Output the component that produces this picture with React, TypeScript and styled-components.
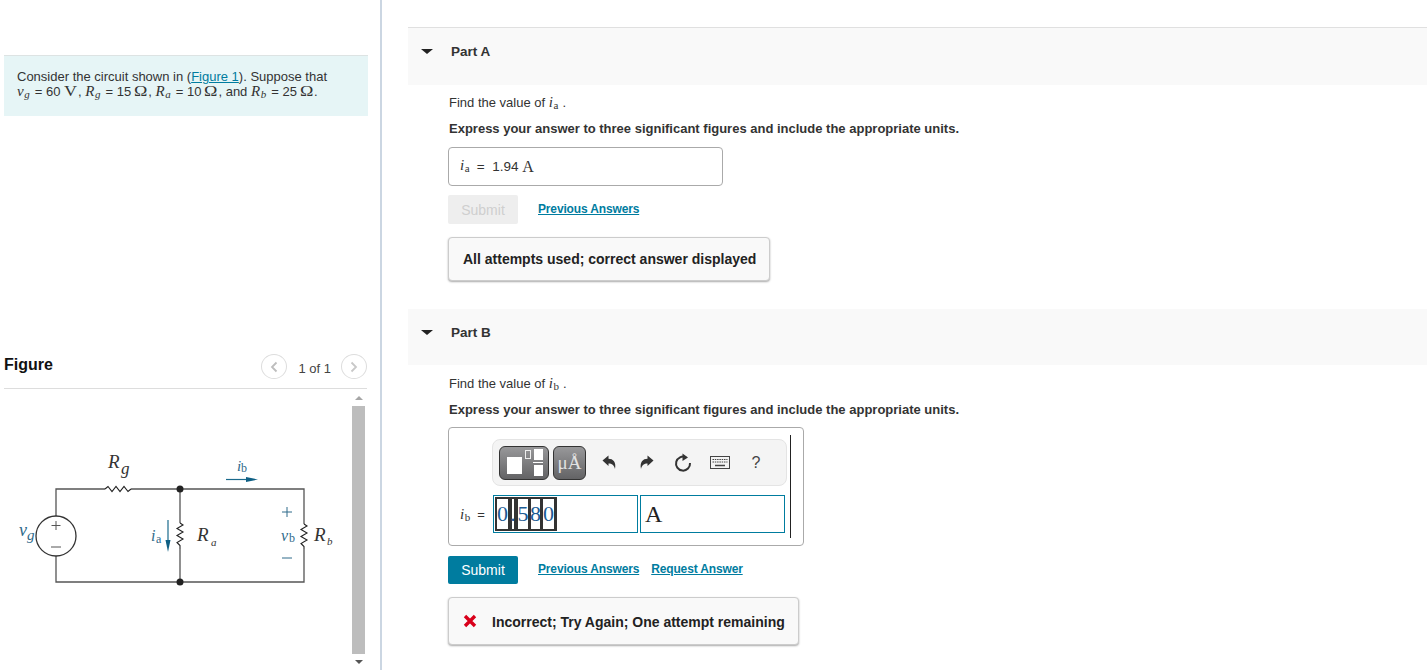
import React from "react";
import styled, { createGlobalStyle } from "styled-components";

const Global = createGlobalStyle`
  html, body { margin: 0; padding: 0; background: #fff; overflow: hidden; }
  body { font-family: "Liberation Sans", Arial, sans-serif; color: #333; font-size: 13px; }
`;
const Page = styled.div`display: flex; width: 1427px; height: 670px; overflow: hidden;`;
const LeftPanel = styled.aside`
  width: 382px; height: 670px; box-sizing: border-box; flex: none;
  border-right: 2px solid #cbd6e2; padding: 55px 12px 0 4px; display: flex; flex-direction: column;
`;
const Info = styled.div`
  height: 61px; box-sizing: border-box; background: #e6f5f6; border-top: 1px solid #dde3e3;
  padding: 13px 13px; font-size: 13px; line-height: 15px; color: #333; white-space: nowrap;
`;
const Link = styled.a`color: #007c9f; text-decoration: underline;`;
const FigHead = styled.div`
  margin: 239px 1px 0 0; height: 33px; display: flex; align-items: center; border-bottom: 1px solid #ddd;
`;
const FigTitle = styled.h2`margin: 0 auto 0 0; font-size: 16px; font-weight: bold; color: #111; position: relative; top: -7px;`;
const Circle = styled.span`
  width: 26px; height: 25px; box-sizing: border-box; border: 1px solid #ddd; border-radius: 50%;
  display: flex; align-items: center; justify-content: center; position: relative; top: -5px;
`;
const PageNo = styled.span`font-size: 13px; color: #444; margin: 0 10px 0 11px; position: relative; top: -3px;`;
const FigBody = styled.div`flex: 1; display: flex; min-height: 0; margin-right: 2px;`;
const FigCanvas = styled.div`flex: 1; min-width: 0;`;
const Scrollbar = styled.div`
  width: 15px; flex: none; display: flex; flex-direction: column; align-items: center; background: #fff;
`;
const Thumb = styled.div`width: 13px; flex: 1; background: #bdbdbd;`;
const Arrow = styled.div<{ $up?: boolean }>`
  height: ${(p) => (p.$up ? 17 : 16)}px; width: 15px; display: flex; align-items: center; justify-content: center;
  &::before {
    content: ""; border-left: 4px solid transparent; border-right: 4px solid transparent;
    ${(p) => (p.$up ? "border-bottom: 4px solid #a6a6a6;" : "border-top: 4px solid #555;")}
  }
`;
const Right = styled.main`flex: 1; min-width: 0; padding: 27px 0 0 26px;`;
const PartHead = styled.div<{ $top: number; $border?: boolean }>`
  height: ${(p) => p.$top}px; box-sizing: border-box; background: #f9f9f9; display: flex; align-items: flex-start;
  padding: 16px 0 0 13px; ${(p) => (p.$border ? "border-top: 1px solid #e0e0e0;" : "")}
`;
const Tri = styled.span`
  width: 0; height: 0; border-left: 6px solid transparent; border-right: 6px solid transparent;
  border-top: 5px solid #222; margin: 5px 18px 0 0;
`;
const PartTitle = styled.h3`margin: 0; font-size: 13.500px; line-height: 16px; font-weight: bold; color: #333;`;
const PartBody = styled.section`padding-left: 41px;`;
const PartGap = styled.div`height: 28px;`;
const Line = styled.p<{ $mt: number; $bold?: boolean }>`
  margin: ${(p) => p.$mt}px 0 0; font-size: 13px; line-height: 18px; height: 18px; color: #333;
  font-weight: ${(p) => (p.$bold ? "bold" : "normal")};
  white-space: nowrap;
`;
const V = styled.i<{ $mr?: number }>`
  font-family: "Liberation Serif", serif; font-style: italic; font-size: 15px; color: #333; letter-spacing: 0.500px;
  line-height: 0; margin-right: ${(p) => p.$mr ?? 0}px;
`;
const Sub = styled.sub<{ $it?: boolean }>`
  font-family: "Liberation Serif", serif; font-size: 11px; line-height: 0; font-style: ${(p) => (p.$it ? "italic" : "normal")};
  vertical-align: -2px;
`;
const U = styled.span`
  font-family: "Liberation Serif", serif; font-size: 16px; line-height: 0;
`;
const InfoUnit = styled.span<{ $ml?: number }>`
  display: inline-block; width: 14px; margin-left: ${(p) => p.$ml ?? 0}px;
  font-family: "Liberation Serif", serif; font-size: 15px; line-height: 0;
  transform: scaleX(1.2); transform-origin: left center;
`;
const AnswerBox = styled.div`
  margin: 9px 0 0 -1px; width: 275px; height: 39px; box-sizing: border-box; border: 1px solid #aaa;
  border-radius: 4px; display: flex; align-items: center; padding-left: 11px; font-size: 13.500px; white-space: pre;
`;
const Actions = styled.div<{ $mt: number }>`margin: ${(p) => p.$mt}px 0 0 -1px; display: flex; align-items: flex-start;`;
const SubmitBtn = styled.button<{ $on?: boolean; $h: number }>`
  width: 70px; height: ${(p) => p.$h}px; border: 0; border-radius: 2px; padding: 0; margin-right: 20px;
  font: 14px "Liberation Sans", Arial, sans-serif;
  background: ${(p) => (p.$on ? "#007c9f" : "#eeeeee")}; color: ${(p) => (p.$on ? "#fff" : "#cfcfcf")};
`;
const ActionLink = styled(Link)<{ $mt: number }>`
  font-size: 12px; font-weight: bold; line-height: 14px; margin: ${(p) => p.$mt}px 12px 0 0; letter-spacing: -0.15px;
`;
const Feedback = styled.div<{ $w: number; $h: number; $mt: number }>`
  margin: ${(p) => p.$mt}px 0 0 -1px; width: ${(p) => p.$w}px; height: ${(p) => p.$h}px; box-sizing: border-box;
  background: #f9f9f9; border: 1px solid #ccc; border-radius: 4px; box-shadow: 0 1px 2px #aaa;
  display: flex; align-items: center; gap: 15px; padding-left: 14px;
  font-size: 14px; font-weight: bold; color: #222; white-space: nowrap;
`;
const FeedbackText = styled.span`position: relative; top: 1px;`;
const Editor = styled.div`
  margin: 8px 0 0 -1px; width: 356px; height: 119px; box-sizing: border-box; border: 1px solid #aaa; border-radius: 4px;
  position: relative; padding: 11px 0 0 43px;
`;
const Caret = styled.span`position: absolute; left: 341px; top: 7px; width: 1px; height: 103px; background: #222;`;
const Toolbar = styled.div`
  width: 295px; height: 47px; box-sizing: border-box; background: #f4f4f4; border: 1px solid #e4e4e4; border-radius: 8px;
  display: flex; align-items: center; padding: 0 0 0 6px;
`;
const ToolBtn = styled.span<{ $w: number }>`
  width: ${(p) => p.$w}px; height: 34px; box-sizing: border-box; border: 1px solid #333; border-radius: 6px;
  background: linear-gradient(#98989a, #636365); margin-right: 4px; display: flex; align-items: center; justify-content: center;
  color: #e2e2e2; font-family: "Liberation Serif", serif; font-size: 19px; line-height: 1;
`;
const IconSlot = styled.span<{ $w: number }>`
  width: ${(p) => p.$w}px; height: 34px; display: flex; align-items: center; justify-content: center; color: #444; font-size: 16px;
`;
const EntryRow = styled.div`display: flex; align-items: center; margin: 9px 0 0 -32px;`;
const EntryLabel = styled.span`width: 33px; box-sizing: border-box; font-size: 13px; white-space: pre;`;
const Field = styled.div<{ $w: number }>`
  width: ${(p) => p.$w}px; height: 38px; box-sizing: border-box; border: 1px solid #007c9f; margin-right: 2px;
  display: flex; align-items: center; padding-left: 1px;
  font-family: "Liberation Serif", serif; font-size: 24px; color: #222;
`;
const Digits = styled.div`
  display: flex; height: 34px; box-sizing: border-box; background: #333; padding: 2px 3px 2px 2px;
`;
const Digit = styled.span<{ $w: number; $gap: number }>`
  flex: none; min-width: 0; width: ${(p) => p.$w}px; margin-right: ${(p) => p.$gap}px; background: #fff; color: #1c5c94;
  display: flex; align-items: center; justify-content: center; font-size: 22px; overflow: visible;
`;
const UnitText = styled.span`margin-left: 3px;`;

const Zig = ({ d }: { d: string }) => <path d={d} fill="none" stroke="#222" strokeWidth="1.1" />;
const T = styled.text<{ $it?: boolean; $c?: string }>`
  font-family: "Liberation Serif", serif; font-style: ${(p) => (p.$it ? "italic" : "normal")};
  fill: ${(p) => p.$c || "#333"};
`;
const BLUE = "#2f6a8a";

const Circuit = () => (
  <svg width="347" height="282" viewBox="4 388 347 282">
    <g fill="none" stroke="#555" strokeWidth="1.3">
      <path d="M105 488H56V515M56 555V581H304V548M131 488H304V523M180 488V522M180 548V581" />
      <circle cx="56" cy="535" r="20" stroke="#333" />
    </g>
    <Zig d="M105 488l3-2.500 4 5 4-5 4 5 4-5 4 5 3-2.500" />
    <Zig d="M180 522l3 2 -6 3.500 6 3.500 -6 3.500 6 3.500 -6 3.500 3 3 V548" />
    <Zig d="M304 523l3 2 -6 3.500 6 3.500 -6 3.500 6 3.500 -6 3.500 3 3 V548" />
    <circle cx="180" cy="488" r="3.500" fill="#222" />
    <circle cx="180" cy="581" r="3.500" fill="#222" />
    <path d="M56 520v9M51.500 524.500h9M51 546h10" stroke="#555" strokeWidth="1" />
    <path d="M282 511h10M287 506v10M282 557h10" stroke={BLUE} strokeWidth="1" />
    <path d="M226 478.500h20" stroke="#1a6a8c" strokeWidth="1.200" />
    <path d="M258 478.500l-12-2.500v5z" fill="#0e5f84" />
    <path d="M168 519v20" stroke="#1a6a8c" strokeWidth="1.200" />
    <path d="M168 551l-2.500-12h5z" fill="#0e5f84" />
    <T $it x="108" y="467" fontSize="19">R</T>
    <T $it x="121" y="473" fontSize="17">g</T>
    <T $it x="237" y="470" fontSize="15" $c={BLUE}>i</T>
    <T x="241" y="471" fontSize="12" $c={BLUE}>b</T>
    <T $it x="19" y="535" fontSize="18" $c={BLUE}>v</T>
    <T $it x="27" y="539" fontSize="15" $c={BLUE}>g</T>
    <T $it x="151" y="540" fontSize="16" $c={BLUE}>i</T>
    <T x="156" y="542" fontSize="12" $c={BLUE}>a</T>
    <T $it x="197" y="540" fontSize="19">R</T>
    <T $it x="211" y="545" fontSize="11">a</T>
    <T $it x="281" y="540" fontSize="16" $c={BLUE}>v</T>
    <T x="289" y="541" fontSize="12" $c={BLUE}>b</T>
    <T $it x="314" y="540" fontSize="19">R</T>
    <T $it x="327" y="544" fontSize="11">b</T>
  </svg>
);

const Chevron = ({ left, color }: { left?: boolean; color: string }) => (
  <svg width="10" height="12" viewBox="0 0 10 12">
    <path d={left ? "M7.500 1.500L3 6l4.500 4.500" : "M2.500 1.500L7 6l-4.500 4.500"} fill="none" stroke={color} strokeWidth="1.800" />
  </svg>
);
const Turn = ({ flip }: { flip?: boolean }) => (
  <svg width="15" height="15" viewBox="0 0 15 15" style={flip ? { transform: "scaleX(-1)" } : undefined}>
    <path d="M0.500 5.500L6.500 0.500V3.800C11 3.800 14.500 7 13 14C12 10 10 8.500 6.500 8.500V11z" fill="#333" />
  </svg>
);
const Redo = () => (
  <svg width="18" height="19" viewBox="0 0 18 19">
    <path d="M12 4.300A7 7 0 1 0 16 10" fill="none" stroke="#333" strokeWidth="2" />
    <path d="M8.500 0.500L14 4.500L8.500 8z" fill="#333" />
  </svg>
);
const Keys = () => (
  <svg width="20" height="13" viewBox="0 0 20 13">
    <rect x="0.500" y="0.500" width="19" height="12" fill="#f4f4f4" stroke="#444" />
    <path d="M2.500 3.500h15M2.500 6h15" stroke="#444" strokeWidth="1.200" strokeDasharray="1.500 0.800" />
    <path d="M5 9.500h10" stroke="#444" strokeWidth="1.500" />
  </svg>
);
const TemplateIcon = () => (
  <svg width="37" height="30" viewBox="0 0 37 30">
    <rect x="1" y="9" width="15" height="17" fill="#fff" />
    <rect x="19.500" y="2.500" width="5" height="8" fill="none" stroke="#eee" />
    <rect x="28" y="1" width="9" height="11" fill="#fff" />
    <rect x="27" y="14" width="11" height="1" fill="#fff" />
    <rect x="28" y="17" width="9" height="11" fill="#fff" />
  </svg>
);
const XIcon = () => (
  <svg width="14" height="14" viewBox="0 0 14 14">
    <path d="M2 2L12 12M12 2L2 12" stroke="#d9001b" strokeWidth="3.400" />
  </svg>
);

export default function App() {
  return (
    <Page>
      <Global />
      <LeftPanel>
        <Info>
          Consider the circuit shown in (<Link>Figure 1</Link>). Suppose that<br />
          <V $mr={1}>v<Sub $it>g</Sub></V> = 60 <InfoUnit>V</InfoUnit>, <V $mr={1}>R<Sub $it>g</Sub></V> = 15<InfoUnit $ml={3}>Ω</InfoUnit>, <V $mr={1}>R<Sub $it>a</Sub></V> = 10<InfoUnit $ml={3}>Ω</InfoUnit>, and <V $mr={1}>R<Sub $it>b</Sub></V> = 25<InfoUnit $ml={3}>Ω</InfoUnit>.
        </Info>
        <FigHead>
          <FigTitle>Figure</FigTitle>
          <Circle><Chevron left color="#bdbdbd" /></Circle>
          <PageNo>1 of 1</PageNo>
          <Circle><Chevron color="#c8c8c8" /></Circle>
        </FigHead>
        <FigBody>
          <FigCanvas><Circuit /></FigCanvas>
          <Scrollbar>
            <Arrow $up />
            <Thumb />
            <Arrow />
          </Scrollbar>
        </FigBody>
      </LeftPanel>
      <Right>
        <PartHead $top={58} $border>
          <Tri /><PartTitle>Part A</PartTitle>
        </PartHead>
        <PartBody>
          <Line $mt={9}>Find the value of <V>i<Sub>a</Sub></V> .</Line>
          <Line $mt={8} $bold>Express your answer to three significant figures and include the appropriate units.</Line>
          <AnswerBox><V $mr={3}>i<Sub>a</Sub></V> =  1.94 <U>A</U></AnswerBox>
          <Actions $mt={9}>
            <SubmitBtn $h={29}>Submit</SubmitBtn>
            <ActionLink $mt={7}>Previous Answers</ActionLink>
          </Actions>
          <Feedback $w={322} $h={44} $mt={13}>All attempts used; correct answer displayed</Feedback>
        </PartBody>
        <PartGap />
        <PartHead $top={56}>
          <Tri /><PartTitle>Part B</PartTitle>
        </PartHead>
        <PartBody>
          <Line $mt={10}>Find the value of <V>i<Sub>b</Sub></V> .</Line>
          <Line $mt={8} $bold>Express your answer to three significant figures and include the appropriate units.</Line>
          <Editor>
            <Caret />
            <Toolbar>
              <ToolBtn $w={50}><TemplateIcon /></ToolBtn>
              <ToolBtn $w={33}>μÅ</ToolBtn>
              <IconSlot $w={38}><Turn /></IconSlot>
              <IconSlot $w={36}><Turn flip /></IconSlot>
              <IconSlot $w={38}><Redo /></IconSlot>
              <IconSlot $w={36}><Keys /></IconSlot>
              <IconSlot $w={36}>?</IconSlot>
            </Toolbar>
            <EntryRow>
              <EntryLabel><V $mr={3}>i<Sub>b</Sub></V> = </EntryLabel>
              <Field $w={145}>
                <Digits>
                  <Digit $w={11} $gap={4}>0</Digit>
                  <Digit $w={2} $gap={4}>.</Digit>
                  <Digit $w={10} $gap={3}>5</Digit>
                  <Digit $w={9} $gap={3}>8</Digit>
                  <Digit $w={11} $gap={0}>0</Digit>
                </Digits>
              </Field>
              <Field $w={145}><UnitText>A</UnitText></Field>
            </EntryRow>
          </Editor>
          <Actions $mt={10}>
            <SubmitBtn $on $h={28}>Submit</SubmitBtn>
            <ActionLink $mt={6}>Previous Answers</ActionLink>
            <ActionLink $mt={6}>Request Answer</ActionLink>
          </Actions>
          <Feedback $w={351} $h={48} $mt={13}><XIcon /><FeedbackText>Incorrect; Try Again; One attempt remaining</FeedbackText></Feedback>
        </PartBody>
      </Right>
    </Page>
  );
}
